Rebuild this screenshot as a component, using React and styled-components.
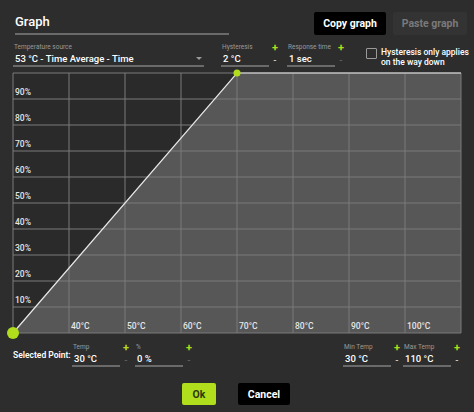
import React from "react";
import styled, { createGlobalStyle } from "styled-components";

const GlobalStyle = createGlobalStyle`
  html, body {
    margin: 0;
    padding: 0;
    background: #2d2d2d;
  }
  body {
    font-family: Roboto, "Liberation Sans", sans-serif;
    color: #fff;
  }
`;

const LIME = "#b0dd1c";

const Page = styled.div`
  width: 474px;
  height: 412px;
  box-sizing: border-box;
  background: #2d2d2d;
  display: flex;
  flex-direction: column;
`;

const Header = styled.div`
  display: flex;
  align-items: flex-start;
  padding: 12px 7px 0 15px;
  height: 31px;
`;

const TitleField = styled.div`
  width: 214px;
  height: 19px;
  padding-top: 2px;
  border-bottom: 2px solid #6a6a6a;
  font-size: 13px;
  font-weight: 500;
  line-height: 16px;
`;

const HeaderButtons = styled.div`
  margin-left: auto;
  display: flex;
  gap: 7px;
`;

const Button = styled.button`
  border: none;
  height: 23px;
  padding: 0;
  width: ${(p) => p.$w}px;
  background: ${(p) => p.$bg};
  color: ${(p) => p.$fg};
  font-family: inherit;
  font-size: 10.5px;
  font-weight: 700;
  border-radius: 2px;
`;

const Controls = styled.div`
  display: flex;
  align-items: flex-start;
  padding: 0 0 0 13px;
  height: 30px;
`;

const Field = styled.div`
  width: ${(p) => p.$w}px;
  margin-left: ${(p) => p.$ml || 0}px;
  display: flex;
  flex-direction: column;
`;

const Label = styled.div`
  font-size: 6.5px;
  color: #9a9a9a;
  height: 9px;
  line-height: 9px;
  padding-left: 1px;
`;

const Value = styled.div`
  font-size: 9.5px;
  font-weight: 500;
  height: 13px;
  line-height: 13px;
  padding-left: 2px;
  border-bottom: 2px solid #6a6a6a;
  display: flex;
  align-items: center;
`;

const Arrow = styled.span`
  margin-left: auto;
  margin-right: 2px;
  width: 0;
  height: 0;
  border-left: 3px solid transparent;
  border-right: 3px solid transparent;
  border-top: 3px solid #9a9a9a;
`;

const Stepper = styled.div`
  width: 12px;
  display: flex;
  flex-direction: column;
  align-items: center;
  margin-right: ${(p) => p.$mr || 0}px;
`;

const Plus = styled.span`
  color: ${LIME};
  font-size: 11px;
  font-weight: 700;
  line-height: 10px;
  height: 10px;
`;

const Minus = styled.span`
  color: ${(p) => (p.$dim ? "#666" : "#ddd")};
  font-size: 10px;
  line-height: 12px;
  margin-top: 2px;
`;

const CheckRow = styled.div`
  display: flex;
  align-items: flex-start;
  margin-left: 19px;
  margin-top: 4px;
  gap: 4px;
`;

const Box = styled.span`
  width: 9px;
  height: 9px;
  border: 1px solid #9a9a9a;
  margin-top: 1px;
  border-radius: 1px;
`;

const CheckText = styled.div`
  font-size: 8.5px;
  font-weight: 500;
  line-height: 10px;
`;

const ChartWrap = styled.div`
  padding-left: 13px;
  height: 270px;
`;

const BottomRow = styled.div`
  display: flex;
  align-items: flex-start;
  padding-left: 13px;
  height: 40px;
`;

const PointLabel = styled.div`
  font-size: 8.5px;
  font-weight: 600;
  margin-top: 7px;
  width: 59px;
`;

const Actions = styled.div`
  display: flex;
  justify-content: center;
  gap: 22px;
  padding-right: 2px;
`;

const cols = [0, 1, 2, 3, 4, 5, 6, 7, 8];
const rows = [0, 1, 2, 3, 4, 5, 6, 7, 8, 9, 10];
const FONT = "Roboto, 'Liberation Sans', sans-serif";

const Chart = () => {
  const W = 448;
  const H = 260;
  const cw = W / 8;
  const rh = H / 10;
  const px = (t) => ((t - 30) / 80) * W;
  const py = (v) => H - (v / 100) * H;
  const path = `M${px(30)},${py(0)} L${px(70)},${py(100)} L${W},${py(100)}`;
  return (
    <svg width={W} height={H} style={{ overflow: "visible", display: "block" }}>
      <rect x="0" y="0" width={W} height={H} fill="#2a2a2a" />
      <path d={`${path} L${W},${H} Z`} fill="#575757" />
      {cols.map((c) => (
        <line key={`c${c}`} x1={c * cw} x2={c * cw} y1="0" y2={H} stroke="#7a7a7a" strokeWidth="1" />
      ))}
      {rows.map((r) => (
        <line key={`r${r}`} x1="0" x2={W} y1={r * rh} y2={r * rh} stroke="#7a7a7a" strokeWidth="1" />
      ))}
      {[90, 80, 70, 60, 50, 40, 30, 20, 10].map((v) => (
        <text key={v} x="2" y={py(v) - 4} fill="#e6e6e6" fontSize="8.5" fontFamily={FONT} fontWeight="500">
          {v}%
        </text>
      ))}
      {[40, 50, 60, 70, 80, 90, 100].map((t) => (
        <text key={t} x={px(t) + 2} y={H - 4} fill="#e6e6e6" fontSize="8.5" fontFamily={FONT} fontWeight="500">
          {t}°C
        </text>
      ))}
      <path d={path} fill="none" stroke="#e8e8e8" strokeWidth="1.2" />
      <circle cx={px(30)} cy={py(0)} r="6" fill={LIME} />
      <circle cx={px(70)} cy={py(100)} r="3.5" fill={LIME} />
    </svg>
  );
};

const NumField = ({ label, value, w, ml }) => (
  <Field $w={w} $ml={ml}>
    <Label>{label}</Label>
    <Value>{value}</Value>
  </Field>
);

const Step = ({ dim, mr }) => (
  <Stepper $mr={mr}>
    <Plus>+</Plus>
    <Minus $dim={dim}>-</Minus>
  </Stepper>
);

export default function App() {
  return (
    <Page>
      <GlobalStyle />
      <Header>
        <TitleField>Graph</TitleField>
        <HeaderButtons>
          <Button $w={72} $bg="#000" $fg="#fff">Copy graph</Button>
          <Button $w={74} $bg="#333" $fg="#7a7a7a">Paste graph</Button>
        </HeaderButtons>
      </Header>

      <Controls>
        <Field $w={191}>
          <Label>Temperature source</Label>
          <Value>
            53 °C - Time Average - Time
            <Arrow />
          </Value>
        </Field>
        <NumField label="Hysteresis" value="2 °C" w={48} ml={17} />
        <Step mr={6} />
        <NumField label="Response time" value="1 sec" w={48} />
        <Step dim />
        <CheckRow>
          <Box />
          <CheckText>
            Hysteresis only applies
            <br />
            on the way down
          </CheckText>
        </CheckRow>
      </Controls>

      <ChartWrap>
        <Chart />
      </ChartWrap>

      <BottomRow>
        <PointLabel>Selected Point:</PointLabel>
        <NumField label="Temp" value="30 °C" w={48} />
        <Step dim mr={3} />
        <NumField label="%" value="0 %" w={48} />
        <Step dim />
        <NumField label="Min Temp" value="30 °C" w={48} ml={148} />
        <Step />
        <NumField label="Max Temp" value="110 °C" w={48} />
        <Step />
      </BottomRow>

      <Actions>
        <Button $w={34} $bg={LIME} $fg="#2c3a0c" style={{ height: 22 }}>Ok</Button>
        <Button $w={52} $bg="#000" $fg="#fff" style={{ height: 22 }}>Cancel</Button>
      </Actions>
    </Page>
  );
}
